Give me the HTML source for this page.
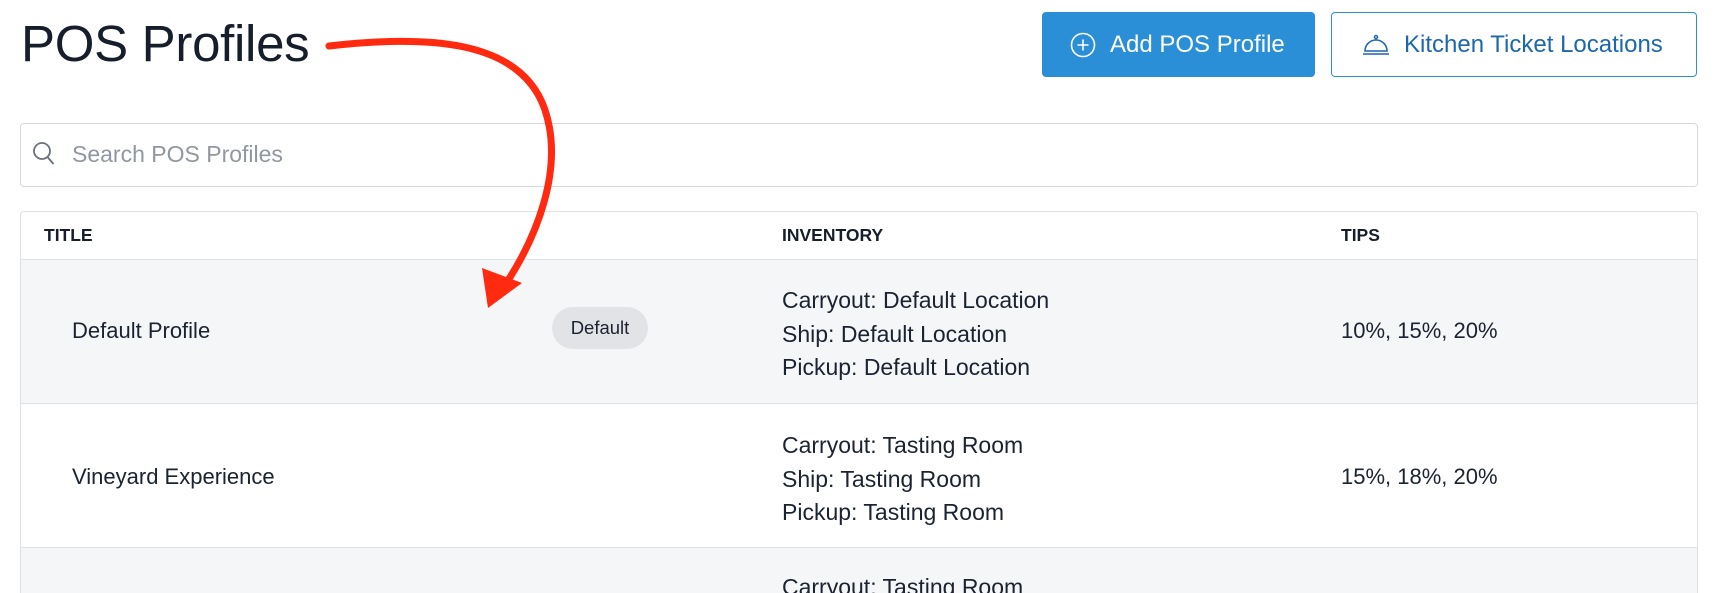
<!DOCTYPE html>
<html><head><meta charset="utf-8"><style>
*{box-sizing:border-box;margin:0;padding:0}
html,body{width:1720px;height:593px;overflow:hidden;background:#fff}
body{font-family:"Liberation Sans",sans-serif;color:#1b2230}
#w{position:relative;width:1720px;height:593px;overflow:hidden}
.abs{position:absolute}
h1{position:absolute;left:21px;top:14px;font-size:51px;font-weight:400;letter-spacing:-0.3px;color:#161d2b}
.btn{position:absolute;top:12px;height:65px;border-radius:4px;display:flex;align-items:center;font-size:24px}
.b1{left:1042px;width:273px;background:#2a8fd6;color:#fff;padding-left:28px}
.b2{left:1331px;width:366px;border:1.5px solid #2a8fd6;color:#1c67ad;padding-left:30px}
.search{left:20px;top:123px;width:1678px;height:64px;border:1.5px solid #d6d8dc;border-radius:4px}
.ph{left:72px;top:141px;font-size:23px;color:#9197a1}
.table{left:20px;top:211px;width:1678px;height:382px;border:1.5px solid #dfe1e4;border-bottom:none;border-radius:4px 4px 0 0;overflow:hidden}
.hd{position:absolute;top:225px;font-size:17.5px;font-weight:700;color:#161d2b}
.row{position:absolute;left:21px;width:1676px}
.t{position:absolute;font-size:22px;color:#1b2230}
.inv{font-size:23px}
</style></head><body><div id="w">
<h1>POS Profiles</h1>
<div class="btn b1"><svg width="26" height="26" viewBox="0 0 26 26" style="margin-right:14px"><circle cx="13" cy="13" r="11.5" fill="none" stroke="#fff" stroke-width="1.6"/><path d="M13 7.5v11M7.5 13h11" stroke="#fff" stroke-width="1.6"/></svg>Add POS Profile</div>
<div class="btn b2"><svg width="28" height="24" viewBox="0 0 28 24" style="margin-right:14px"><path d="M3 18 A11 11 0 0 1 25 18 Z M1 21h26 M14 5v2" fill="none" stroke="#1c67ad" stroke-width="1.6"/><circle cx="14" cy="4" r="1.5" fill="none" stroke="#1c67ad" stroke-width="1.4"/></svg>Kitchen Ticket Locations</div>
<div class="abs search"></div>
<svg class="abs" style="left:32px;top:141px" width="26" height="28" viewBox="0 0 26 28"><circle cx="10" cy="10" r="8" fill="none" stroke="#6b717b" stroke-width="1.8"/><path d="M15.5 16l6 7" stroke="#6b717b" stroke-width="1.8"/></svg>
<div class="abs ph">Search POS Profiles</div>
<div class="abs table"></div>
<div class="hd" style="left:44px">TITLE</div>
<div class="hd" style="left:782px">INVENTORY</div>
<div class="hd" style="left:1341px">TIPS</div>
<div class="row" style="top:259px;height:144px;background:#f5f6f8;border-top:1.5px solid #dfe1e4"></div>
<div class="row" style="top:403px;height:144px;background:#fff;border-top:1.5px solid #dfe1e4"></div>
<div class="row" style="top:547px;height:46px;background:#f5f6f8;border-top:1.5px solid #dfe1e4"></div>
<div class="t" style="left:72px;top:318px">Default Profile</div>
<div class="abs" style="left:552px;top:307px;width:96px;height:42px;border-radius:21px;background:#e2e3e6;font-size:18.5px;display:flex;align-items:center;justify-content:center">Default</div>
<div class="t inv" style="left:782px;top:284px;line-height:33.5px">Carryout: Default Location<br>Ship: Default Location<br>Pickup: Default Location</div>
<div class="t" style="left:1341px;top:318px">10%, 15%, 20%</div>
<div class="t" style="left:72px;top:464px">Vineyard Experience</div>
<div class="t inv" style="left:782px;top:429px;line-height:33.5px">Carryout: Tasting Room<br>Ship: Tasting Room<br>Pickup: Tasting Room</div>
<div class="t" style="left:1341px;top:464px">15%, 18%, 20%</div>
<div class="t inv" style="left:782px;top:574px;height:19px;overflow:hidden">Carryout: Tasting Room</div>
<svg class="abs" style="left:0;top:0" width="1720" height="593"><path d="M329,46 C420,36 520,36 545,110 C565,170 535,240 505,285" fill="none" stroke="#ff2a0f" stroke-width="7" stroke-linecap="round"/><path d="M488,308 L482,268 L522,283 Z" fill="#ff2a0f"/></svg>
</div></body></html>
